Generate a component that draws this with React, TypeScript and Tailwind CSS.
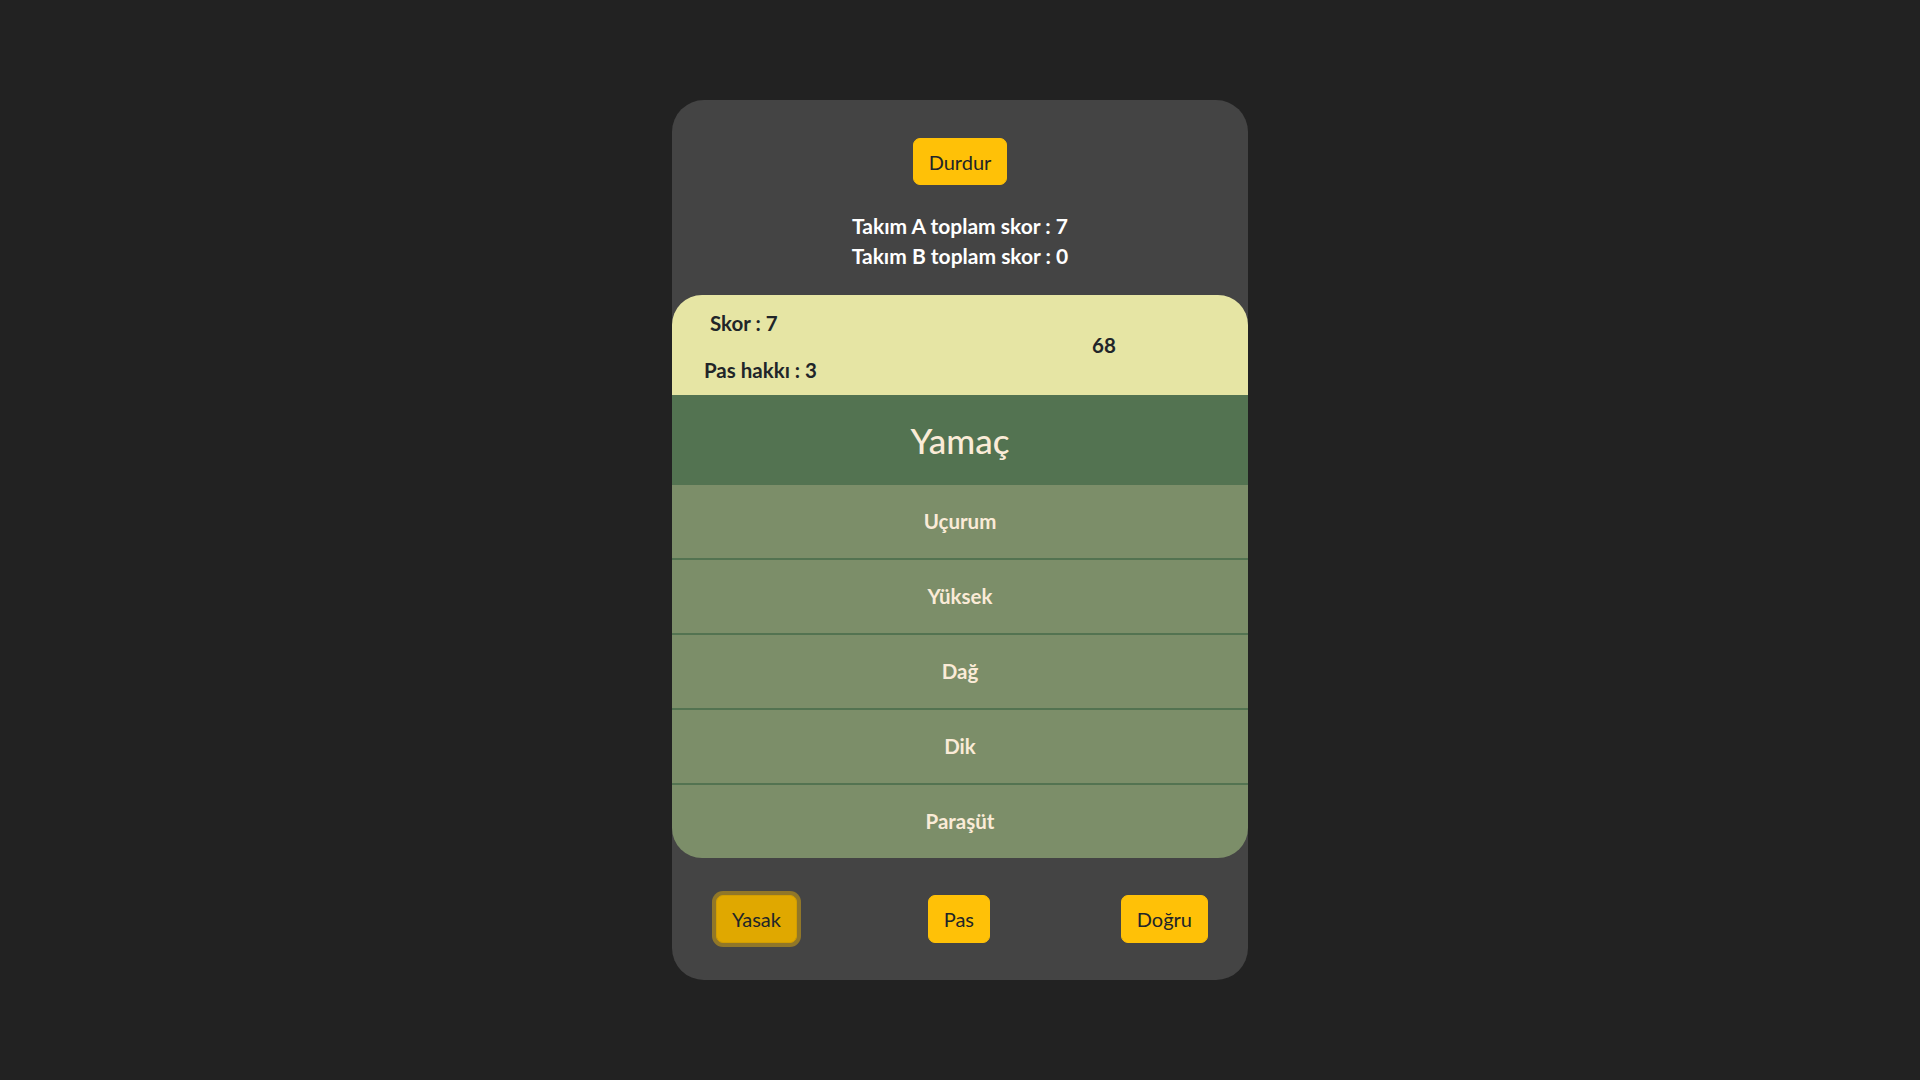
import React from "react";

const words = ["Uçurum", "Yüksek", "Dağ", "Dik", "Paraşüt"];

export default function App() {
  return (
    <div
      className="min-h-screen bg-[#222222] flex justify-center pt-[100px]"
      style={{ fontFamily: 'Lato, "Noto Sans", sans-serif' }}
    >
      <div className="w-[576px] h-[880px] bg-[#444444] rounded-[32px] flex flex-col">
        <div className="pt-[38px] flex justify-center">
          <button className="h-[47px] px-[15px] text-[20px] leading-[30px] rounded-[7px] bg-[#ffc107] border border-[#ffc107] text-[#212529]">
            Durdur
          </button>
        </div>
        <div className="mt-[26px] text-center font-bold text-white text-[21px] leading-[30px]">
          <p>Takım A toplam skor : 7</p>
          <p>Takım B toplam skor : 0</p>
        </div>
        <div className="mt-[24px] rounded-[30px] overflow-hidden">
          <div className="h-[100px] bg-[#e6e5a4] grid grid-cols-2 text-[#212529] font-bold text-[20.5px] leading-[30px]">
            <div className="flex flex-col pt-[13px]">
              <p className="pl-[38px]">Skor : 7</p>
              <p className="pl-[32px] mt-[17px]">Pas hakkı : 3</p>
            </div>
            <div className="flex items-center justify-center">
              <p>68</p>
            </div>
          </div>
          <div className="h-[90px] bg-[#537351] flex items-center justify-center text-[#faebd7] text-[35px] font-medium">
            Yamaç
          </div>
          <div className="bg-[#7c8e69] divide-y-2 divide-[#537351]">
            {words.map((w) => (
              <div
                key={w}
                className="box-content h-[73px] flex items-center justify-center text-[#faebd7] font-bold text-[20.5px]"
              >
                {w}
              </div>
            ))}
          </div>
        </div>
        <div className="mt-[37px] flex justify-between items-center pl-[44px] pr-[40px]">
          <button className="h-[48px] px-[15px] text-[20px] leading-[30px] rounded-[7px] bg-[#e0a800] border border-[#d39e00] text-[#212529] shadow-[0_0_0_4px_rgba(222,170,12,0.5)]">
            Yasak
          </button>
          <button className="h-[48px] px-[15px] text-[20px] leading-[30px] rounded-[7px] bg-[#ffc107] border border-[#ffc107] text-[#212529]">
            Pas
          </button>
          <button className="h-[48px] px-[15px] text-[20px] leading-[30px] rounded-[7px] bg-[#ffc107] border border-[#ffc107] text-[#212529]">
            Doğru
          </button>
        </div>
      </div>
    </div>
  );
}
